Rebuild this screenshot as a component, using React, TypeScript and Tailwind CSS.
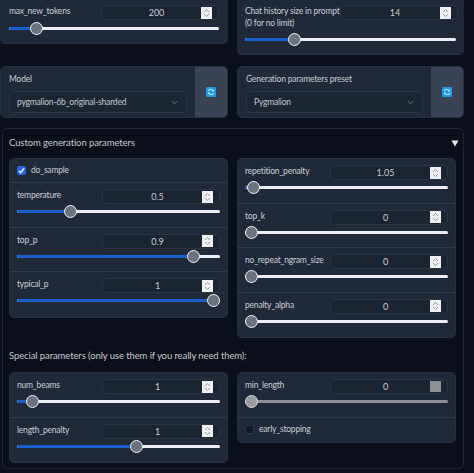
import React, { type ReactNode } from 'react'

const FONT = "font-['Lato',sans-serif]"

interface SliderRowProps {
    label: ReactNode
    value: string
    percent: number
    disabled?: boolean
    last?: boolean
}

const Spinner = ({ disabled }: { disabled?: boolean }): ReactNode => {
    if (disabled) {
        return <div className="w-[11px] h-[11px] bg-[#8b8f96] shrink-0" />
    }
    return (
        <div className="w-[11px] h-[12px] bg-[#eef0f2] shrink-0 flex items-center justify-center">
            <svg width="7" height="10" viewBox="0 0 7 10" fill="none" stroke="#8a8f98" strokeWidth="0.9">
                <path d="M1 4 L3.5 1.5 L6 4" />
                <path d="M1 6 L3.5 8.5 L6 6" />
            </svg>
        </div>
    )
}

const Slider = ({ percent, disabled }: { percent: number; disabled?: boolean }): ReactNode => {
    return (
        <div className={`relative h-[3px] rounded-full ${disabled ? 'bg-[#8b8f96]' : 'bg-[#eceef1]'}`}>
            <div className="h-full rounded-full bg-[#1a5fcb]" style={{ width: `${percent}%` }} />
            <div
                className={`absolute top-1/2 w-[13px] h-[13px] -mt-[6.5px] -ml-[6.5px] rounded-full border-[1.5px] ${disabled ? 'bg-[#9a9ca3] border-[#d5d7da]' : 'bg-[#6b7280] border-[#f3f4f6]'}`}
                style={{ left: `calc(6.5px + (100% - 13px) * ${percent / 100})` }}
            />
        </div>
    )
}

const NumberBox = ({ value, disabled }: { value: string; disabled?: boolean }): ReactNode => {
    return (
        <div className="w-[118px] h-[15px] rounded-[5px] border border-[#2b3544] bg-[#1b2431] flex items-center pl-[8px] pr-[6px] shrink-0">
            <div className="flex-1 text-center text-[9px] leading-none text-[#c9ced6] pl-[2px]">{value}</div>
            <Spinner disabled={disabled} />
        </div>
    )
}

const SliderRow = (props: SliderRowProps): ReactNode => {
    return (
        <div className={`px-[7px] pt-[6px] h-[44.5px] ${props.last ? '' : 'border-b border-[#303b4b]'}`}>
            <div className="flex items-start justify-between h-[16px]">
                <div className="text-[8.5px] tracking-[-0.2px] leading-[12px] text-[#c9ced6] whitespace-nowrap">{props.label}</div>
                <NumberBox value={props.value} disabled={props.disabled} />
            </div>
            <div className="mt-[5px]">
                <Slider percent={props.percent} disabled={props.disabled} />
            </div>
        </div>
    )
}

const CheckRow = ({ label, checked }: { label: string; checked?: boolean }): ReactNode => {
    return (
        <div className="h-[24px] px-[7px] flex items-center gap-[5px] border-b border-[#303b4b] last:border-b-0">
            <div className={`w-[9px] h-[9px] rounded-[2px] flex items-center justify-center ${checked ? 'bg-[#2563eb]' : 'bg-[#111827] border border-[#2b3544]'}`}>
                {checked ? (
                    <svg width="7" height="7" viewBox="0 0 8 8" fill="none" stroke="#fff" strokeWidth="1.6">
                        <path d="M1 4.5 L3 6.5 L7 1.5" />
                    </svg>
                ) : null}
            </div>
            <span className="text-[8.5px] tracking-[-0.2px] leading-none text-[#c9ced6]">{label}</span>
        </div>
    )
}

const RefreshIcon = (): ReactNode => {
    return (
        <svg width="10" height="10" viewBox="0 0 10 10">
            <rect width="10" height="10" rx="1.5" fill="#1e9be8" />
            <path d="M2 4 C2.5 2 6 1.8 7 3.6 M8 6 C7.5 8 4 8.2 3 6.4" fill="none" stroke="#e8f6ff" strokeWidth="1" />
            <path d="M8 2.4 V4.4 H6 Z M2 7.6 V5.6 H4 Z" fill="#e8f6ff" />
        </svg>
    )
}

const DropdownCard = ({ label, value, className }: { label: string; value: string; className: string }): ReactNode => {
    return (
        <div className={`h-[52px] flex rounded-[5px] bg-[#1f2937] border border-[#273141] overflow-hidden ${className}`}>
            <div className="flex-1 px-2 pt-[6px]">
                <div className="text-[8.5px] tracking-[-0.2px] leading-[13px] text-[#c4c9d1]">{label}</div>
                <div className="mt-[5px] h-[22px] rounded-[5px] border border-[#2b3544] bg-[#1c2532] flex items-center justify-between pl-[7px] pr-[8px]">
                    <span className="text-[8.5px] tracking-[-0.2px] text-[#c4c9d1]">{value}</span>
                    <svg width="7" height="5" viewBox="0 0 7 5" fill="none" stroke="#6b7280" strokeWidth="1">
                        <path d="M0.8 1 L3.5 3.8 L6.2 1" />
                    </svg>
                </div>
            </div>
            <div className="w-[32px] bg-[#3a4353] flex items-center justify-center">
                <RefreshIcon />
            </div>
        </div>
    )
}

const Card = ({ children, className }: { children: ReactNode; className?: string }): ReactNode => {
    return <div className={`rounded-[5px] bg-[#1f2937] border border-[#273141] overflow-hidden ${className ?? ''}`}>{children}</div>
}

export default function App(): ReactNode {
    return (
        <div className={`w-[474px] h-[473px] overflow-hidden bg-[#0b0f19] pr-[10px] ${FONT}`}>
            <div className="flex items-start gap-[9px]">
                <div className="w-[228px] h-[44px] rounded-b-[5px] bg-[#1f2937] border-b border-[#273141] px-[9px] pt-[5px]">
                    <div className="flex items-start justify-between h-[17px]">
                        <div className="text-[8.5px] tracking-[-0.2px] leading-[12px] text-[#c9ced6]">max_new_tokens</div>
                        <NumberBox value="200" />
                    </div>
                    <div className="mt-[5px]">
                        <Slider percent={10.5} />
                    </div>
                </div>
                <div className="w-[227px] h-[55px] rounded-b-[5px] bg-[#1f2937] border-b border-[#273141] px-[8px] pt-[5px]">
                    <div className="flex items-start justify-between h-[28px]">
                        <div className="text-[8.5px] tracking-[-0.2px] leading-[12px] text-[#c9ced6] whitespace-nowrap">
                            Chat history size in prompt
                            <br />
                            (0 for no limit)
                        </div>
                        <NumberBox value="14" />
                    </div>
                    <div className="mt-[5px]">
                        <Slider percent={21.5} />
                    </div>
                </div>
            </div>

            <div className="flex gap-[9px] mt-[11px]">
                <DropdownCard className="w-[228px]" label="Model" value="pygmalion-6b_original-sharded" />
                <DropdownCard className="w-[227px]" label="Generation parameters preset" value="Pygmalion" />
            </div>

            <div className="mt-[10px] ml-[2px] h-[341px] rounded-[5px] border border-[#1f2937] pl-[6px] pr-[7px]">
                <div className="h-[29px] flex items-center justify-between">
                    <span className="text-[9.5px] tracking-[-0.1px] text-[#c4c9d1]">Custom generation parameters</span>
                    <svg width="8" height="7" viewBox="0 0 8 7" className="mr-[-3px]">
                        <path d="M0.5 0.5 H7.5 L4 6.5 Z" fill="#e5e7eb" />
                    </svg>
                </div>
                <div className="flex items-start gap-[9px]">
                    <Card className="flex-1">
                        <CheckRow label="do_sample" checked />
                        <SliderRow label="temperature" value="0.5" percent={24.6} />
                        <SliderRow label="top_p" value="0.9" percent={89.5} />
                        <SliderRow label="typical_p" value="1" percent={100} last />
                    </Card>
                    <Card className="flex-1">
                        <SliderRow label="repetition_penalty" value="1.05" percent={1} />
                        <SliderRow label="top_k" value="0" percent={0} />
                        <SliderRow label="no_repeat_ngram_size" value="0" percent={0} />
                        <SliderRow label="penalty_alpha" value="0" percent={0} last />
                    </Card>
                </div>
                <div className="mt-[11px] h-[14px] text-[9.5px] tracking-[-0.1px] leading-[14px] text-[#c4c9d1]">Special parameters (only use them if you really need them):</div>
                <div className="mt-[9px] flex items-start gap-[9px]">
                    <Card className="flex-1">
                        <SliderRow label="num_beams" value="1" percent={4.7} />
                        <SliderRow label="length_penalty" value="1" percent={59.7} last />
                    </Card>
                    <Card className="flex-1">
                        <SliderRow label="min_length" value="0" percent={0} disabled />
                        <CheckRow label="early_stopping" />
                    </Card>
                </div>
            </div>
        </div>
    )
}
